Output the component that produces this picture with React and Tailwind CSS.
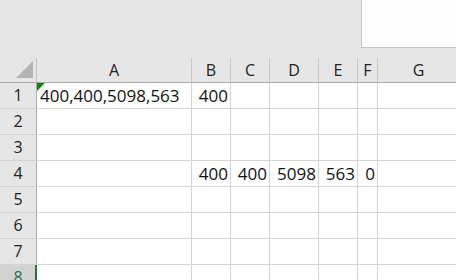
import React from "react";

const cols = [
  { k: "A", w: "w-[155px]" },
  { k: "B", w: "w-[39px]" },
  { k: "C", w: "w-[39px]" },
  { k: "D", w: "w-[49px]" },
  { k: "E", w: "w-[39px]" },
  { k: "F", w: "w-[20px]" },
  { k: "G", w: "w-[82px]" },
];

const data = {
  1: { A: { v: "400,400,5098,563", left: true, flag: true }, B: { v: "400" } },
  4: { B: { v: "400" }, C: { v: "400" }, D: { v: "5098" }, E: { v: "563" }, F: { v: "0" } },
};

export default function App() {
  const rows = [1, 2, 3, 4, 5, 6, 7, 8];
  return (
    <div
      className="w-[456px] h-[280px] overflow-hidden bg-white text-[#111]"
      style={{ fontFamily: '"Open Sans", "Noto Sans", sans-serif' }}
    >
      {/* top band */}
      <div className="h-[58px] bg-[#e6e6e6] flex justify-end">
        <div className="w-[95px] h-[48px] bg-[#fefefe] border-l border-b border-[#c6c6c6]" />
      </div>

      {/* column header */}
      <div className="flex h-[25px] bg-[#e6e6e6] border-b border-[#ababab]">
        <div className="w-[37px] shrink-0 border-r border-[#c0c0c0] relative">
          <svg width="36" height="24" className="absolute left-0 top-0">
            <polygon points="16,20 33,3 33,20" fill="#b4b4b4" />
          </svg>
        </div>
        {cols.map((c) => (
          <div
            key={c.k}
            className={`${c.w} shrink-0 border-r border-[#c6c6c6] flex items-center justify-center text-[16px] leading-[24px] text-[#222]`}
          >
            {c.k}
          </div>
        ))}
      </div>

      {/* rows */}
      {rows.map((r) => {
        const active = r === 8;
        return (
          <div key={r} className="flex h-[26px] border-b border-[#d4d4d4]">
            <div
              className={
                active
                  ? "w-[37px] shrink-0 bg-[#d2d2d2] border-r-2 border-[#217346] text-[#217346] text-[16px] leading-[25px] text-center pl-[1px]"
                  : "w-[37px] shrink-0 bg-[#e6e6e6] border-r border-[#ababab] text-[#222] text-[16px] leading-[25px] text-center"
              }
            >
              {r}
            </div>
            {cols.map((c) => {
              const cell = data[r] && data[r][c.k];
              return (
                <div
                  key={c.k}
                  className={`${c.w} shrink-0 border-r border-[#d4d4d4] relative overflow-hidden`}
                >
                  {cell && cell.flag && (
                    <div className="absolute left-0 top-0 w-0 h-0 border-t-[8px] border-t-[#128212] border-r-[8px] border-r-transparent" />
                  )}
                  {cell && (
                    <div
                      className={
                        cell.left
                          ? "text-[17px] leading-[25px] whitespace-nowrap pl-[3px] text-left"
                          : "text-[17px] leading-[25px] whitespace-nowrap pr-[2px] text-right"
                      }
                    >
                      {cell.v}
                    </div>
                  )}
                </div>
              );
            })}
          </div>
        );
      })}
    </div>
  );
}
